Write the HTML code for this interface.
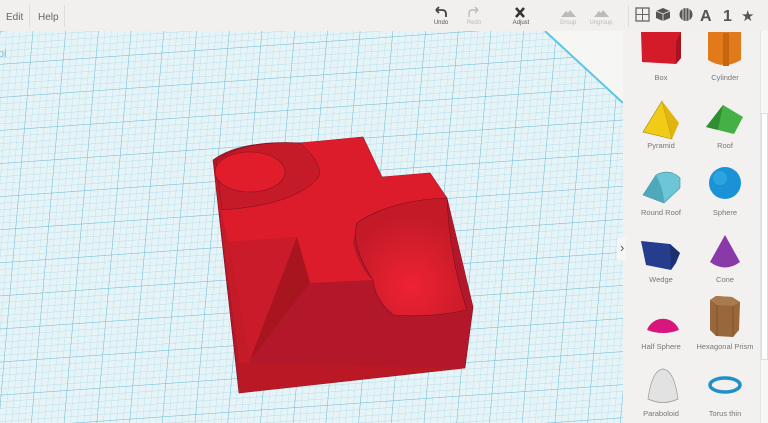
<!DOCTYPE html>
<html><head><meta charset="utf-8"><style>
*{margin:0;padding:0;box-sizing:border-box}
body{width:768px;height:423px;overflow:hidden;font-family:"Liberation Sans",sans-serif;background:#f1f0ee;position:relative}
.top{position:absolute;left:0;top:0;width:768px;height:31px;background:#f1f0ee}
.t{position:absolute;font-size:10px;color:#666}
.s{position:absolute;font-size:6px;color:#555;text-align:center;width:40px}
.lbl{position:absolute;font-size:7.5px;color:#777;text-align:center;width:70px}
</style></head><body>
<div class="top">
<div class="t" style="left:6px;top:12px">Edit</div>
<div style="position:absolute;left:29px;top:5px;width:1px;height:22px;background:#ddd"></div>
<div class="t" style="left:38px;top:12px">Help</div>
<div style="position:absolute;left:64px;top:5px;width:1px;height:22px;background:#ddd"></div>
<div style="position:absolute;left:628px;top:5px;width:1px;height:22px;background:#ddd"></div>
<div class="s" style="left:421px;top:20px">Undo</div>
<div class="s" style="left:454px;top:20px;color:#bbb">Redo</div>
<div class="s" style="left:501px;top:20px">Adjust</div>
<div class="s" style="left:548px;top:20px;color:#bbb">Group</div>
<div class="s" style="left:581px;top:20px;color:#bbb">Ungroup</div>
<svg style="position:absolute;left:0;top:0" width="768" height="31">
<path d="M436 10 L439 7 M436 10 L439 13 M436 10 H442 Q446 10 446 14 V17" fill="none" stroke="#444" stroke-width="1.8"/>
<path d="M478 10 L475 7 M478 10 L475 13 M478 10 H472 Q469 10 469 14 V17" fill="none" stroke="#bbb" stroke-width="1.4"/>
<path d="M516 8 L524 17 M524 8 L516 17" stroke="#333" stroke-width="2.5"/>
<path d="M561 17 L566 11 L568 13 L570 10 L576 17Z" fill="#bbb"/>
<path d="M594 17 L599 11 L601 13 L603 10 L609 17Z" fill="#bbb"/>
<rect x="636" y="8" width="13" height="13" fill="none" stroke="#666" stroke-width="1.3"/><path d="M642.5 8V21M636 14.5H649" stroke="#666"/>
<path d="M663 8 L670 11 V18 L663 21 L656 18 V11Z" fill="#555"/><path d="M656 11 L663 14 L670 11 M663 14V21" stroke="#f1f0ee" stroke-width=".8" fill="none"/>
<circle cx="686" cy="14.5" r="6.5" fill="#555"/><path d="M683 8.5V20.5M686 8V21M689 8.5V20.5" stroke="#f1f0ee" stroke-width=".8"/>
<text x="700" y="21" font-size="16" font-weight="bold" fill="#555" font-family="Liberation Sans">A</text>
<text x="723" y="21" font-size="16" font-weight="bold" fill="#555" font-family="Liberation Sans">1</text>
<text x="741" y="21" font-size="15" fill="#555">★</text>
</svg>
</div>
<svg style="position:absolute;left:0;top:31px" width="623" height="392">
<defs>
<pattern id="minor" width="6.6" height="6.6" patternUnits="userSpaceOnUse" patternTransform="rotate(-4) skewX(-9)">
<path d="M0 0H6.6M0 0V6.6" stroke="#a9d6e5" stroke-width=".6" fill="none"/></pattern>
<pattern id="major" width="33" height="33" patternUnits="userSpaceOnUse" patternTransform="rotate(-4) skewX(-9)">
<path d="M0 0H33M0 0V33" stroke="#6fbdd6" stroke-width="1" fill="none"/></pattern>
<radialGradient id="hole" cx=".5" cy=".75" r=".6"><stop offset="0" stop-color="#ee2233"/><stop offset="1" stop-color="#c41a28"/></radialGradient>
</defs>
<rect width="623" height="392" fill="#e6f4f8"/>
<rect width="623" height="392" fill="url(#minor)"/>
<rect width="623" height="392" fill="url(#major)"/>
<polygon points="545,0 623,0 623,72" fill="#f6f6f4"/>
<line x1="545" y1="0" x2="623" y2="72" stroke="#5cc6e6" stroke-width="2"/>
<text x="-2" y="26" font-size="11" fill="#7cc3da">pi</text>
<g transform="translate(0,-31)">
<path d="M213,160 Q240,140 300,143 L363,137 L382,177 L430,173 L447,198 L473,307 L465,368 L239,393 Z" fill="#b3172a" stroke="#7a1020" stroke-width=".6"/>
<polygon points="213,160 222,208 228,242 250,360 239,393 239,363" fill="#c41b29"/>
<polygon points="239,363 465,368 465,368 239,393" fill="#bb1826"/>
<path d="M216,162 Q240,140 300,143 L363,137 L382,177 L430,173 L447,198 Q390,200 357,223 L353,243 Q360,270 373,280 L310,283 L297,237 L228,242 L221,210 Z" fill="#dd1c2b"/>
<path d="M216,162 Q240,140 300,143 Q325,165 318,178 Q295,205 222,210 Z" fill="#c51a28" stroke="#7a1020" stroke-width=".5"/>
<ellipse cx="250" cy="172" rx="35" ry="20" fill="#e11d2c" stroke="#8a1020" stroke-width=".6"/>
<polygon points="228,242 297,237 250,360" fill="#c91b29"/>
<polygon points="297,237 310,283 250,360" fill="#a8151f"/>
<path d="M447,198 Q390,200 357,223 Q350,245 373,280 Q375,300 393,315 Q430,318 467,310 Q450,260 447,198 Z" fill="url(#hole)" stroke="#7a1020" stroke-width=".6"/>
<path d="M447,198 L473,307 L467,310 Z" fill="#b3172a"/>
</g>
</svg>
<div style="position:absolute;left:623px;top:31px;width:137px;height:392px;background:#f2f1ef"></div>
<div style="position:absolute;left:760px;top:31px;width:8px;height:392px;background:#f7f7f6;border-left:1px solid #e4e4e4"></div>
<div style="position:absolute;left:761px;top:113px;width:7px;height:247px;background:#fff;border:1px solid #ddd"></div>
<div style="position:absolute;left:617px;top:238px;width:9px;height:22px;background:#f6f6f5;border-radius:2px 0 0 2px"></div>
<div style="position:absolute;left:620px;top:240px;font-size:13px;color:#555">›</div>
<div class="lbl" style="left:626px;top:73px">Box</div>
<div class="lbl" style="left:690px;top:73px">Cylinder</div>
<div class="lbl" style="left:626px;top:141px">Pyramid</div>
<div class="lbl" style="left:690px;top:141px">Roof</div>
<div class="lbl" style="left:626px;top:208px">Round Roof</div>
<div class="lbl" style="left:690px;top:208px">Sphere</div>
<div class="lbl" style="left:626px;top:275px">Wedge</div>
<div class="lbl" style="left:690px;top:275px">Cone</div>
<div class="lbl" style="left:626px;top:342px">Half Sphere</div>
<div class="lbl" style="left:690px;top:342px">Hexagonal Prism</div>
<div class="lbl" style="left:626px;top:409px">Paraboloid</div>
<div class="lbl" style="left:690px;top:409px">Torus thin</div>
<svg style="position:absolute;left:600px;top:0" width="168" height="423">
<polygon points="41,32 81,32 81,58 76,64 42,62" fill="#d31b2a"/><polygon points="76,42 81,32 81,58 76,64" fill="#a9131f"/>
<path d="M108,32 H141 V60 Q124,70 108,60Z" fill="#e07a1a"/><path d="M126,33 V66" stroke="#c8650f" stroke-width="6"/>
<polygon points="62,101 43,132 72,139" fill="#f0cc18" stroke="#a08410" stroke-width=".6"/><polygon points="62,101 72,139 79,123" fill="#e0b510"/>
<polygon points="106,127 123,105 143,117 134,134" fill="#45b045"/><polygon points="106,127 123,105 118,130" fill="#2f8e33"/>
<path d="M43,195 L56,175 Q70,168 80,178 L80,188 L64,203 Z" fill="#6cc6d6" stroke="#3b8fa0" stroke-width=".6"/><path d="M43,195 L56,175 Q64,190 64,203Z" fill="#4fa9bb"/>
<circle cx="125" cy="183" r="16" fill="#1a93d6"/><circle cx="120" cy="178" r="7" fill="#3aaee8" opacity=".6"/>
<polygon points="41,241 70,244 80,253 76,263 71,270 46,265" fill="#253d8c"/><polygon points="70,244 80,253 71,270" fill="#1c2f6e"/>
<path d="M125,235 L110,262 Q125,273 140,262Z" fill="#8a3aa8"/>
<path d="M47,330 A17 17 0 0 1 79,330 Q63,336 47,330Z" fill="#d8167e"/>
<polygon points="110,300 116,296 132,297 140,302 139,330 133,337 116,336 110,330" fill="#98683a"/><polygon points="110,300 116,296 132,297 140,302 133,306 117,305" fill="#a97a4c"/><path d="M117,305V336 M133,306V337" stroke="#6b4525" stroke-width=".6"/>
<path d="M48,399 Q52,370 63,369 Q74,370 78,399 Q63,406 48,399Z" fill="#e2e2e2" stroke="#999" stroke-width=".7"/>
<ellipse cx="125" cy="385" rx="15" ry="7" fill="none" stroke="#2190c6" stroke-width="3.5"/>
</svg>
</body></html>
